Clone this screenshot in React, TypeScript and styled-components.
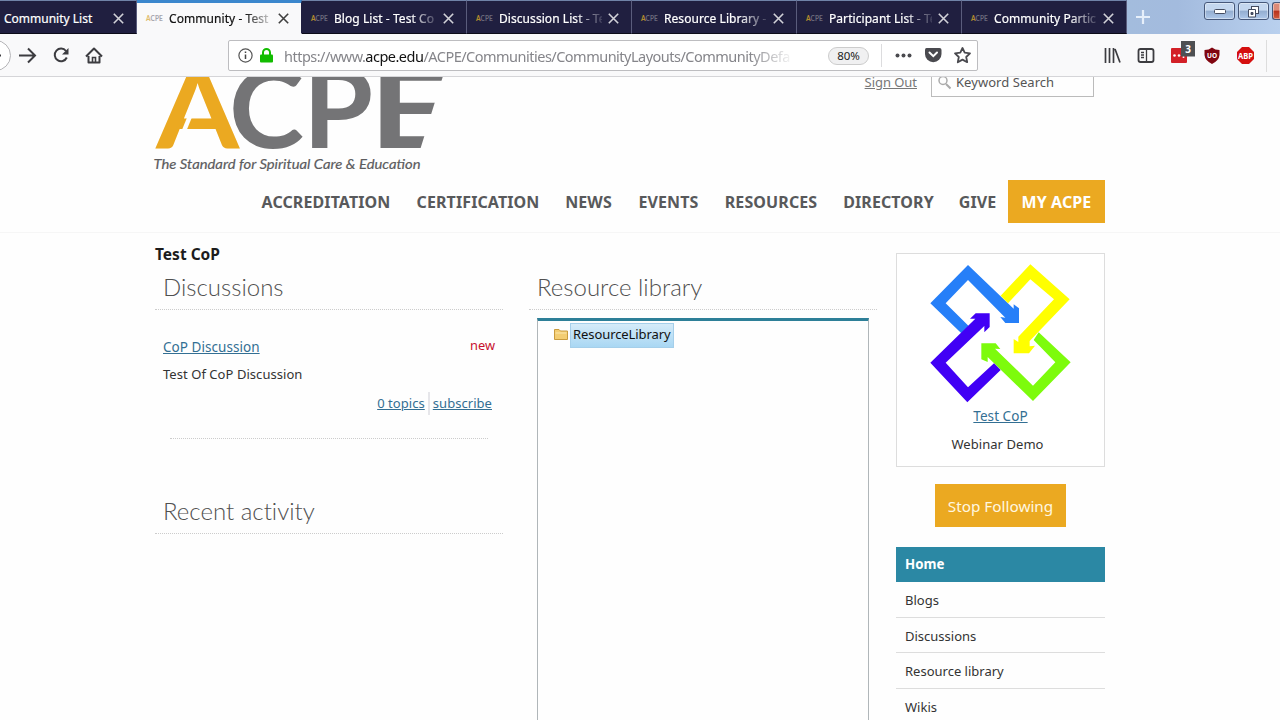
import React from "react";
import styled, { createGlobalStyle, css } from "styled-components";

const sans = `"Noto Sans", "Open Sans", sans-serif`;

const Global = createGlobalStyle`
  * { box-sizing: border-box; }
  body { margin: 0; background: #fefefe; font-family: ${sans}; overflow: hidden; }
`;

const Window = styled.div`
  width: 1280px;
  height: 720px;
  overflow: hidden;
  display: flex;
  flex-direction: column;
  background: #fefefe;
`;

/* ---------- browser chrome ---------- */

const TabStrip = styled.div`
  height: 34px;
  flex: none;
  display: flex;
  background: linear-gradient(90deg, #a3bcdd 88%, #a3bbde 92%, #b9d0ee 100%);
`;

const TabBox = styled.div<{ $active?: boolean; $first?: boolean }>`
  width: ${(p) => (p.$first ? 137 : 165)}px;
  height: 34px;
  flex: none;
  display: flex;
  align-items: center;
  padding: 3px 0 0 ${(p) => (p.$first ? 4 : 9)}px;
  background: #201f40;
  border-top: 1px solid #7083a8;
  border-bottom: 1px solid #0b0b18;
  border-right: 1px solid #5a5c7c;
  color: #fff;
  ${(p) =>
    p.$active &&
    css`
      background: #f9f9fa;
      color: #111;
      border-top: 3px solid #3b87cd;
      border-bottom-color: #f9f9fa;
      border-right-color: #201f40;
      padding-top: 1px;
    `}
`;

const Favicon = styled.span<{ $active?: boolean }>`
  width: 23px;
  font: 700 6.5px/8px Lato, sans-serif;
  color: ${(p) => (p.$active ? "#a5a5ad" : "#6a6a7c")};
  b { color: ${(p) => (p.$active ? "#e0bd70" : "#b08a2c")}; }
`;

const TabTitle = styled.span<{ $active?: boolean }>`
  width: 103px;
  overflow: hidden;
  white-space: nowrap;
  font-size: 12px;
  line-height: 18px;
  letter-spacing: 0.06px;
  -webkit-text-stroke: 0.2px currentColor;
  mask-image: linear-gradient(90deg, #000 76px, rgba(0, 0, 0, 0.1) 104px);
`;

const FullTitle = styled(TabTitle)`
  letter-spacing: 0;
  mask-image: none;
`;

const CloseIcon = styled.svg`
  margin-left: 6px;
  width: 11px;
  height: 11px;
  stroke: currentColor;
  opacity: 0.8;
  stroke-width: 1.6;
`;

const NewTab = styled.svg`
  width: 14px;
  height: 14px;
  margin: 10px 0 0 9px;
  flex: none;
  stroke: #e6effa;
  stroke-width: 2.2;
`;

const WindowButtons = styled.div`
  margin-left: auto;
  display: flex;
  gap: 3px;
  padding-top: 2px;
`;

const WindowButton = styled.div<{ $close?: boolean }>`
  width: ${(p) => (p.$close ? 8 : 31)}px;
  height: 18px;
  display: flex;
  align-items: center;
  justify-content: center;
  border: 1px solid #46587a;
  border-right-width: ${(p) => (p.$close ? 0 : 1)}px;
  border-radius: ${(p) => (p.$close ? "3px 0 0 3px" : "3px")};
  background: ${(p) =>
    p.$close
      ? "linear-gradient(#dc8a78 45%, #b8321c 50%, #cf5a3c)"
      : "linear-gradient(#c4d7ef 45%, #93add0 50%, #aec8ea)"};
  box-shadow: inset 0 0 0 1px rgba(255, 255, 255, 0.4);
  svg { margin-top: 2px; }
`;

const Toolbar = styled.div`
  height: 43px;
  flex: none;
  display: flex;
  align-items: center;
  background: #f9f9fa;
  border-bottom: 1px solid #d5d5d8;
`;

const NavIcons = styled.div`
  width: 228px;
  display: flex;
  padding-top: 1px;
  svg { display: block; }
`;

const UrlBar = styled.div`
  width: 750px;
  height: 31px;
  flex: none;
  display: flex;
  align-items: center;
  background: #fff;
  border: 1px solid #bdbdc0;
  border-radius: 2px;
`;

const UrlIcons = styled.svg`
  width: 38px;
  height: 20px;
  margin: 1px 0 0 8px;
`;

const Url = styled.div`
  width: 508px;
  margin: 1px 0 0 9px;
  overflow: hidden;
  white-space: nowrap;
  font-size: 14.5px;
  line-height: 22px;
  letter-spacing: -0.51px;
  color: #85858a;
  mask-image: linear-gradient(90deg, #000 465px, rgba(0, 0, 0, 0.1) 506px);
  b { font-weight: 400; color: #111; }
`;

const ZoomPill = styled.div`
  width: 41px;
  height: 18px;
  margin: 1px 0 0 36px;
  border: 1px solid #ccc;
  border-radius: 9px;
  background: #f0f0f1;
  font-size: 11.5px;
  line-height: 16px;
  text-align: center;
  color: #222;
`;

const ThinRule = styled.div<{ $gap: number; $h: number }>`
  width: 1px;
  height: ${(p) => p.$h}px;
  margin-left: ${(p) => p.$gap}px;
  background: #dcdcde;
`;

const UrlActions = styled.svg`
  width: 90px;
  height: 20px;
  margin-left: 1px;
`;

const Extensions = styled.div`
  display: flex;
  align-items: center;
  margin-left: 124px;
  padding-top: 2px;
  svg { display: block; }
`;

/* ---------- site header ---------- */

const Page = styled.div`
  flex: 1;
  min-height: 0;
  overflow: hidden;
`;

const Header = styled.header`
  height: 156px;
  padding: 0 175px 0 153px;
  border-bottom: 1px solid #f6f6f6;
`;

const Masthead = styled.div`
  height: 103px;
  display: flex;
  justify-content: space-between;
`;

const Account = styled.div`
  display: flex;
  padding-right: 11px;
`;

const SignOut = styled.a`
  margin-right: 14px;
  margin-top: -5px;
  font-size: 13px;
  line-height: 20px;
  letter-spacing: -0.05px;
  color: #777;
  text-decoration: underline;
`;

const SearchBox = styled.div`
  width: 163px;
  height: 20px;
  display: flex;
  border: 1px solid #bbb;
  border-top: 0;
  font-size: 13px;
  line-height: 20px;
  letter-spacing: 0.05px;
  color: #555;
  span { margin-top: -5px; }
  svg { margin: -1px 5px 0 6px; }
`;

const Nav = styled.nav`
  height: 43px;
  display: flex;
  justify-content: flex-end;
`;

const NavItem = styled.a<{ $w: number; $on?: boolean }>`
  width: ${(p) => p.$w}px;
  text-align: center;
  white-space: nowrap;
  font-size: 16px;
  font-weight: 700;
  line-height: 44px;
  letter-spacing: 0.1px;
  padding-left: ${(p) => (p.$on ? 0 : 1)}px;
  color: ${(p) => (p.$on ? "#fff" : "#58595b")};
  background: ${(p) => (p.$on ? "#eba921" : "none")};
`;

/* ---------- content ---------- */

const Content = styled.main`
  display: flex;
  padding-left: 155px;
`;

const MainColumn = styled.section`
  width: 348px;
  padding-top: 11px;
`;

const PageTitle = styled.h1`
  margin: 0;
  font-size: 15.5px;
  line-height: 20px;
  font-weight: 700;
  color: #1c1c1c;
`;

const Heading = styled.h2`
  margin: 0;
  height: 46px;
  padding: 7px 0 0 8px;
  border-bottom: 1px dotted #ccc;
  font: 300 24px/32px Lato, sans-serif;
  font-variant-ligatures: none;
  color: #505050;
`;

const Discussion = styled.article`
  padding: 26px 8px 0;
  height: 128px;
`;

const Row = styled.div`
  display: flex;
  justify-content: space-between;
`;

const Link = styled.a`
  font-size: 13.5px;
  line-height: 22px;
  letter-spacing: 0.05px;
  color: #336f93;
  text-decoration: underline;
`;

const NewFlag = styled.span`
  margin-top: -1px;
  font-size: 12.800px;
  line-height: 20px;
  color: #c8102e;
`;

const Body = styled.p`
  margin: 0;
  padding-top: 6px;
  font-size: 13px;
  line-height: 21px;
  letter-spacing: 0.05px;
  color: #333;
`;

const Actions = styled.div`
  display: flex;
  justify-content: flex-end;
  padding: 7px 3px 0 0;
`;

const ActionLink = styled(Link)`
  font-size: 13px;
`;

const Divider = styled.i`
  width: 2px;
  height: 23px;
  margin: 0 3px;
  background: #e6e6ea;
`;

const Separator = styled.div`
  height: 50px;
  margin: 0 15px;
  border-top: 1px dotted #ccc;
`;

const LibraryColumn = styled.section`
  width: 348px;
  margin-left: 26px;
  padding-top: 31px;
`;

const LibraryBox = styled.div`
  width: 332px;
  height: 420px;
  margin: 8px 0 0 8px;
  padding: 2px 0 0 16px;
  display: flex;
  align-items: flex-start;
  border: 1px solid #b0b6b9;
  border-top: 3px solid #2d7f98;
  svg { margin: 5px 2px 0 0; }
`;

const Selected = styled.span`
  height: 25px;
  padding: 0 2px;
  border: 1px solid #a5cfea;
  background: linear-gradient(#d5ebf9, #a9d7f3);
  font-size: 13px;
  line-height: 21px;
  letter-spacing: -0.08px;
  color: #111;
`;

const Sidebar = styled.aside`
  width: 209px;
  margin-left: 19px;
  padding-top: 20px;
  display: flex;
  flex-direction: column;
  align-items: center;
`;

const Card = styled.div`
  width: 209px;
  height: 214px;
  display: flex;
  flex-direction: column;
  align-items: center;
  border: 1px solid #ddd;
  background: #fff;
  svg { display: block; margin: 9px 0 1px; }
`;

const CardText = styled(Body)`
  padding: 7px 6px 0 0;
`;

const FollowButton = styled.button`
  width: 131px;
  height: 43px;
  margin: 17px 0 20px;
  padding: 1px 0 0;
  border: 0;
  background: #eba921;
  color: #fff7e0;
  font: 400 15.3px ${sans};
`;

const Menu = styled.ul`
  width: 209px;
  margin: 0;
  padding: 0;
  list-style: none;
`;

const MenuItem = styled.li<{ $on?: boolean }>`
  height: ${(p) => (p.$on ? 35 : 35.6)}px;
  padding-left: 9px;
  font-size: 13px;
  line-height: ${(p) => (p.$on ? 34 : 37)}px;
  color: #333;
  border-bottom: 1px solid #ddd;
  ${(p) =>
    p.$on &&
    css`
      font-size: 13.3px;
      font-weight: 700;
      color: #fff;
      background: #2b88a4;
      border-bottom: 0;
    `}
`;

/* ---------- pieces ---------- */

function Tab({ title, active, first }: { title: string; active?: boolean; first?: boolean }) {
  const Title = first ? FullTitle : TabTitle;
  return (
    <TabBox $active={active} $first={first}>
      {!first && (
        <Favicon $active={active}>
          <b>A</b>CPE
        </Favicon>
      )}
      <Title>{title}</Title>
      <CloseIcon viewBox="0 0 11 11">
        <path d="M.8.8l9.4 9.4M10.200.8L.8 10.200" />
      </CloseIcon>
    </TabBox>
  );
}

const Logo = () => (
  <svg width="291" height="103" viewBox="153 77 291 103" fontFamily="Lato, sans-serif">
    <defs>
      <clipPath id="slant">
        <path d="M370 60H448L420 150H370Z" />
      </clipPath>
    </defs>
    <g fontWeight="700" fontSize="110" fill="#747476">
      <text transform="translate(156 148) scale(1.09 1)" fill="#eba921">A</text>
      <text transform="translate(229 148) scale(1.03 1)">C</text>
      <text transform="translate(303 148) scale(1.03 1)">P</text>
      <g clipPath="url(#slant)">
        <text transform="translate(369 148) scale(1.3 1)">E</text>
      </g>
    </g>
    <path d="M183.500 132L190.500 115" stroke="#fefefe" strokeWidth="4.500" />
    <text x="153.500" y="168.500" fontSize="14" fontStyle="italic" fill="#5c5c5e" stroke="#5c5c5e" strokeWidth=".2" textLength="267" lengthAdjust="spacingAndGlyphs">
      The Standard for Spiritual Care &amp; Education
    </text>
  </svg>
);

const CommunityMark = () => (
  <svg width="142" height="141" viewBox="121 54 426 423">
    <path fill="#267ff8" d="M235 60L122 175L215 265L237 243L168 175L235 105L347 218L332 216L347 234H388V190L372 178V191Z" />
    <path fill="#ff0" d="M422 58L540 163L420 288V304L436 302L418 325H372V282L386 291V275L493 163L422 103L355 175L333 152Z" />
    <path fill="#7dfb0c" d="M447 262L543 352L430 468L294 336V351L275 343V295H318L332 312L316 311L430 422L497 352L432 285Z" />
    <path fill="#4100f5" d="M122 353L233 472L333 375L313 355L235 427L168 353L284 243V262L300 246V205H258L241 221L257 221Z" />
  </svg>
);

const BrowserIcons = () => (
  <svg width="110" height="32" viewBox="0 40 110 32" fill="none" stroke="#3c3c40" strokeWidth="2">
    <circle cx="-4.500" cy="55.500" r="15" fill="#fff" stroke="#b5b5b8" strokeWidth="1" />
    <path d="M-6 55.500H1" />
    <path d="M19 55.500H34.500M28 48.500L35 55.500L28 62.500" />
    <path d="M66 51A6.300 6.300 0 1 0 66.800 57.500" />
    <path d="M68.500 48V54.500H62Z" fill="#3c3c40" stroke="none" />
    <path d="M86 56.500L94 48.500L102 56.500M88.500 56V62.500H99.500V56" strokeLinejoin="round" />
    <path d="M92.500 63V57.500H95.500V63" strokeWidth="1.600" />
  </svg>
);

const tabs = [
  "Blog List - Test Co",
  "Discussion List - Te",
  "Resource Library -",
  "Participant List - Te",
  "Community Partic",
];

const navItems: [string, number][] = [
  ["ACCREDITATION", 157],
  ["CERTIFICATION", 147],
  ["NEWS", 74],
  ["EVENTS", 86],
  ["RESOURCES", 119],
  ["DIRECTORY", 116],
  ["GIVE", 62],
];

export default function App() {
  return (
    <Window>
      <Global />
      <TabStrip>
        <Tab title="Community List" first />
        <Tab title="Community - Test" active />
        {tabs.map((t) => (
          <Tab key={t} title={t} />
        ))}
        <NewTab viewBox="0 0 14 14">
          <path d="M7 0V14M0 7H14" />
        </NewTab>
        <WindowButtons>
          <WindowButton>
            <svg width="12" height="6">
              <rect x=".5" y=".5" width="11" height="4" rx="1" fill="#fff" stroke="#444c60" />
            </svg>
          </WindowButton>
          <WindowButton>
            <svg width="13" height="12" fill="#fff" stroke="#444c60">
              <rect x="4.500" y=".5" width="7" height="7" />
              <path fillRule="evenodd" d="M1.500 3.500H8.500V11H1.500ZM4 6.500H6V8.500H4Z" />
            </svg>
          </WindowButton>
          <WindowButton $close />
        </WindowButtons>
      </TabStrip>

      <Toolbar>
        <NavIcons>
          <BrowserIcons />
        </NavIcons>
        <UrlBar>
          <UrlIcons>
            <circle cx="8.500" cy="9.500" r="6.600" fill="none" stroke="#555" strokeWidth="1.200" />
            <path d="M8.500 8.500V13M8.500 5.500V7" stroke="#444" strokeWidth="1.500" />
            <rect x="23" y="8.500" width="13" height="8" rx="1" fill="#12bc00" />
            <path d="M26 9V6.500a3.500 3.500 0 0 1 7 0V9" fill="none" stroke="#12bc00" strokeWidth="2" />
          </UrlIcons>
          <Url>
            https://www.<b>acpe.edu</b>/ACPE/Communities/CommunityLayouts/CommunityDefa
          </Url>
          <ZoomPill>80%</ZoomPill>
          <ThinRule $gap={12} $h={23} />
          <UrlActions fill="#4a4a4f">
            <circle cx="14.500" cy="10.500" r="2" />
            <circle cx="20.500" cy="10.500" r="2" />
            <circle cx="26.500" cy="10.500" r="2" />
            <path d="M43.500 3H56.500Q58.500 3 58.500 5V9A8 8 0 0 1 42 9V5Q42 3 43.500 3Z" />
            <path d="M46.500 7.500L50.300 11.200L54 7.500" fill="none" stroke="#fff" strokeWidth="2" strokeLinecap="round" />
            <path d="M79.500 3L81.700 7.700L87 8.400L83.200 12L84.200 17.200L79.500 14.600L74.800 17.200L75.800 12L72 8.400L77.300 7.700Z" fill="none" stroke="#4a4a4f" strokeWidth="1.800" strokeLinejoin="round" />
          </UrlActions>
        </UrlBar>
        <Extensions>
          <svg width="178" height="34" viewBox="1102 39 178 34">
            <path d="M1105.500 48V63M1109.500 48V63M1113.500 48V63M1115 49L1120 62.500" stroke="#3c3c40" strokeWidth="1.700" />
            <rect x="1138.500" y="49" width="15" height="13" rx="2" fill="none" stroke="#3c3c40" strokeWidth="1.800" />
            <path d="M1146.500 49V62M1141 52.500H1144M1141 55H1144M1141 57.500H1144" stroke="#3c3c40" strokeWidth="1.300" />
            <rect x="1171" y="48" width="16" height="15" rx="1" fill="#d32027" />
            <g fill="#fff">
              <circle cx="1174.500" cy="55.500" r="1.300" />
              <circle cx="1179" cy="55.500" r="1.300" />
              <circle cx="1183.500" cy="57" r="1" />
            </g>
            <rect x="1181" y="41" width="14" height="15.500" fill="#4d4f52" />
            <path d="M1212 47.500Q1215 50 1219.500 50V55Q1219 60.500 1212 64Q1205 60.500 1204.500 55V50Q1209 50 1212 47.500Z" fill="#800610" />
            <path d="M1242 47H1249L1254 52V59L1249 64H1242L1237 59V52Z" fill="#d50f0f" />
            <g fill="#fff" fontFamily="Noto Sans, sans-serif" fontWeight="700" textAnchor="middle">
              <text x="1188" y="52.500" fontSize="10">3</text>
              <text x="1212" y="58" fontSize="6.500">UO</text>
              <text x="1245.500" y="58.500" fontSize="8" textLength="15" lengthAdjust="spacingAndGlyphs">ABP</text>
            </g>
            <path d="M1266.500 40V72" stroke="#ddd" />
          </svg>
        </Extensions>
      </Toolbar>

      <Page>
        <Header>
          <Masthead>
            <Logo />
            <Account>
              <SignOut>Sign Out</SignOut>
              <SearchBox>
                <svg width="13" height="14" fill="none" stroke="#aaa">
                  <circle cx="5" cy="4.500" r="4" strokeWidth="1.500" />
                  <path d="M8 8L12.500 12.500" strokeWidth="2" />
                </svg>
                <span>Keyword Search</span>
              </SearchBox>
            </Account>
          </Masthead>
          <Nav>
            {navItems.map(([label, w]) => (
              <NavItem key={label} $w={w}>
                {label}
              </NavItem>
            ))}
            <NavItem $w={97} $on>
              MY ACPE
            </NavItem>
          </Nav>
        </Header>

        <Content>
          <MainColumn>
            <PageTitle>Test CoP</PageTitle>
            <Heading>Discussions</Heading>
            <Discussion>
              <Row>
                <Link>CoP Discussion</Link>
                <NewFlag>new</NewFlag>
              </Row>
              <Body>Test Of CoP Discussion</Body>
              <Actions>
                <ActionLink>0 topics</ActionLink>
                <Divider />
                <ActionLink>subscribe</ActionLink>
              </Actions>
            </Discussion>
            <Separator />
            <Heading>Recent activity</Heading>
          </MainColumn>

          <LibraryColumn>
            <Heading>Resource library</Heading>
            <LibraryBox>
              <svg width="14" height="13">
                <path d="M.5 11.500V1.500H5L6.500 3H13.500V11.500Z" fill="#f3cd72" stroke="#c99b3e" />
                <path d="M1.500 5H12.500" stroke="#fbe7ae" />
              </svg>
              <Selected>ResourceLibrary</Selected>
            </LibraryBox>
          </LibraryColumn>

          <Sidebar>
            <Card>
              <CommunityMark />
              <Link>Test CoP</Link>
              <CardText>Webinar Demo</CardText>
            </Card>
            <FollowButton>Stop Following</FollowButton>
            <Menu>
              <MenuItem $on>Home</MenuItem>
              <MenuItem>Blogs</MenuItem>
              <MenuItem>Discussions</MenuItem>
              <MenuItem>Resource library</MenuItem>
              <MenuItem>Wikis</MenuItem>
            </Menu>
          </Sidebar>
        </Content>
      </Page>
    </Window>
  );
}
